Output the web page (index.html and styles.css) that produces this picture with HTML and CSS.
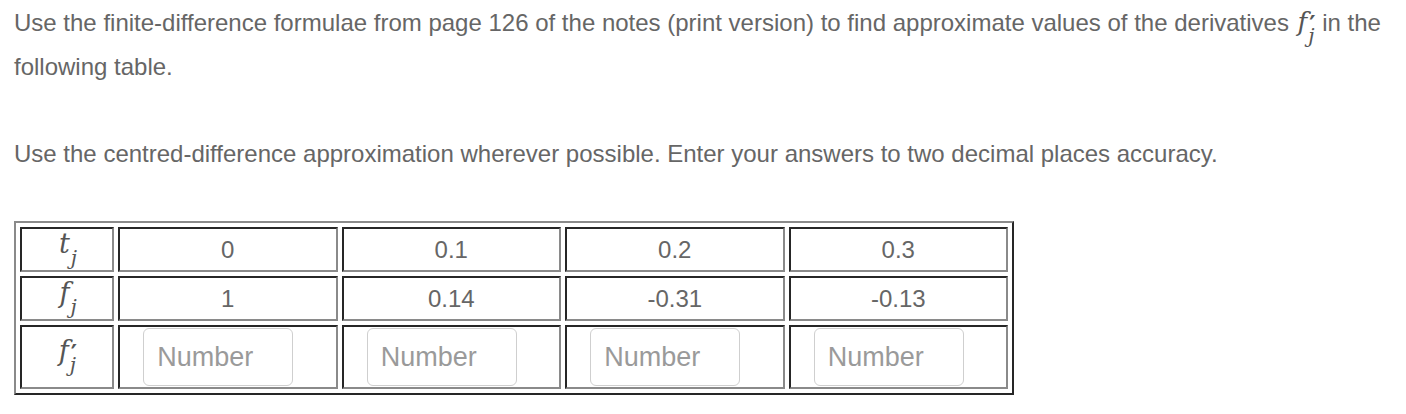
FILE: index.html
```html
<!DOCTYPE html>
<html>
<head>
<meta charset="utf-8">
<link rel="stylesheet" href="styles.css">
</head>
<body>
<div class="page">
  <p class="para">Use the finite-difference formulae from page 126 of the notes (print version) to find approximate values of the derivatives <span class="math pm"><i class="mv">f</i><span class="ss"><span class="pr">′</span><span class="sb">j</span></span></span> in the following table.</p>
  <p class="para para2">Use the centred-difference approximation wherever possible. Enter your answers to two decimal places accuracy.</p>
  <table class="grid">
    <tr>
      <td class="head"><div class="cell"><span class="math cm"><i class="mv">t</i><span class="ss"><span class="pr"></span><span class="sb">j</span></span></span></div></td>
      <td><div class="cell">0</div></td>
      <td><div class="cell">0.1</div></td>
      <td><div class="cell">0.2</div></td>
      <td><div class="cell">0.3</div></td>
    </tr>
    <tr>
      <td class="head"><div class="cell"><span class="math cm"><i class="mv">f</i><span class="ss"><span class="pr"></span><span class="sb">j</span></span></span></div></td>
      <td><div class="cell">1</div></td>
      <td><div class="cell">0.14</div></td>
      <td><div class="cell">-0.31</div></td>
      <td><div class="cell">-0.13</div></td>
    </tr>
    <tr>
      <td class="head"><div class="cell tall"><span class="math cm"><i class="mv">f</i><span class="ss"><span class="pr">′</span><span class="sb">j</span></span></span></div></td>
      <td><div class="cell tall"><input class="num" type="text" placeholder="Number"></div></td>
      <td><div class="cell tall"><input class="num" type="text" placeholder="Number"></div></td>
      <td><div class="cell tall"><input class="num" type="text" placeholder="Number"></div></td>
      <td><div class="cell tall"><input class="num" type="text" placeholder="Number"></div></td>
    </tr>
  </table>
</div>
</body>
</html>
```
FILE: styles.css
```css
body {
  margin: 0;
  background: #fff;
  color: #666;
  font-family: "Liberation Sans", Arial, Helvetica, sans-serif;
}

.page {
  padding: 0 14px;
}

.para {
  margin: 0;
  font-size: 24px;
  line-height: 44px;
}

.para2 {
  margin-top: 43px;
}

.math {
  font-family: "DejaVu Serif", "Liberation Serif", serif;
  white-space: nowrap;
  color: #555;
  margin-left: 2px;
}

.mv {
  font-family: "DejaVu Serif", "Liberation Serif", serif;
  font-style: italic;
  font-size: 26px;
}

.ss {
  display: inline-block;
  vertical-align: -12px;
  margin-left: 1px;
  line-height: 1;
  font-style: italic;
  text-align: left;
}

.pm .ss {
  margin-bottom: -16px;
}

.pr {
  display: block;
  height: 12px;
  font-family: "DejaVu Sans", sans-serif;
  font-size: 24px;
  font-weight: bold;
  line-height: 18px;
  font-style: normal;
  padding-left: 1px;
}

.sb {
  display: block;
  font-size: 20px;
  line-height: 16px;
}

.cm {
  line-height: 1;
  margin-top: -4px;
}

.cm .mv {
  font-size: 27px;
}

.grid {
  margin-top: 45px;
  width: 1000px;
  border-collapse: separate;
  border-spacing: 4px;
  border: 2px solid;
  border-color: #8a8a8a #262626 #262626 #8a8a8a;
}

.grid td {
  border: 2px solid;
  border-color: #262626 #8a8a8a #8a8a8a #262626;
  padding: 0;
  text-align: center;
  font-size: 24px;
}

.grid td.head {
  width: 90px;
}

.cell {
  height: 41px;
  display: flex;
  align-items: center;
  justify-content: center;
}

.cell.tall {
  height: 60px;
}

.num {
  box-sizing: border-box;
  width: 150px;
  height: 58px;
  margin: 0 19px 0 0;
  padding: 0 13px;
  border: 1px solid #cfcfcf;
  border-radius: 6px;
  font-family: inherit;
  font-size: 27px;
  color: #666;
  background: #fff;
}

.num::placeholder {
  color: #9a9a9a;
}
```
